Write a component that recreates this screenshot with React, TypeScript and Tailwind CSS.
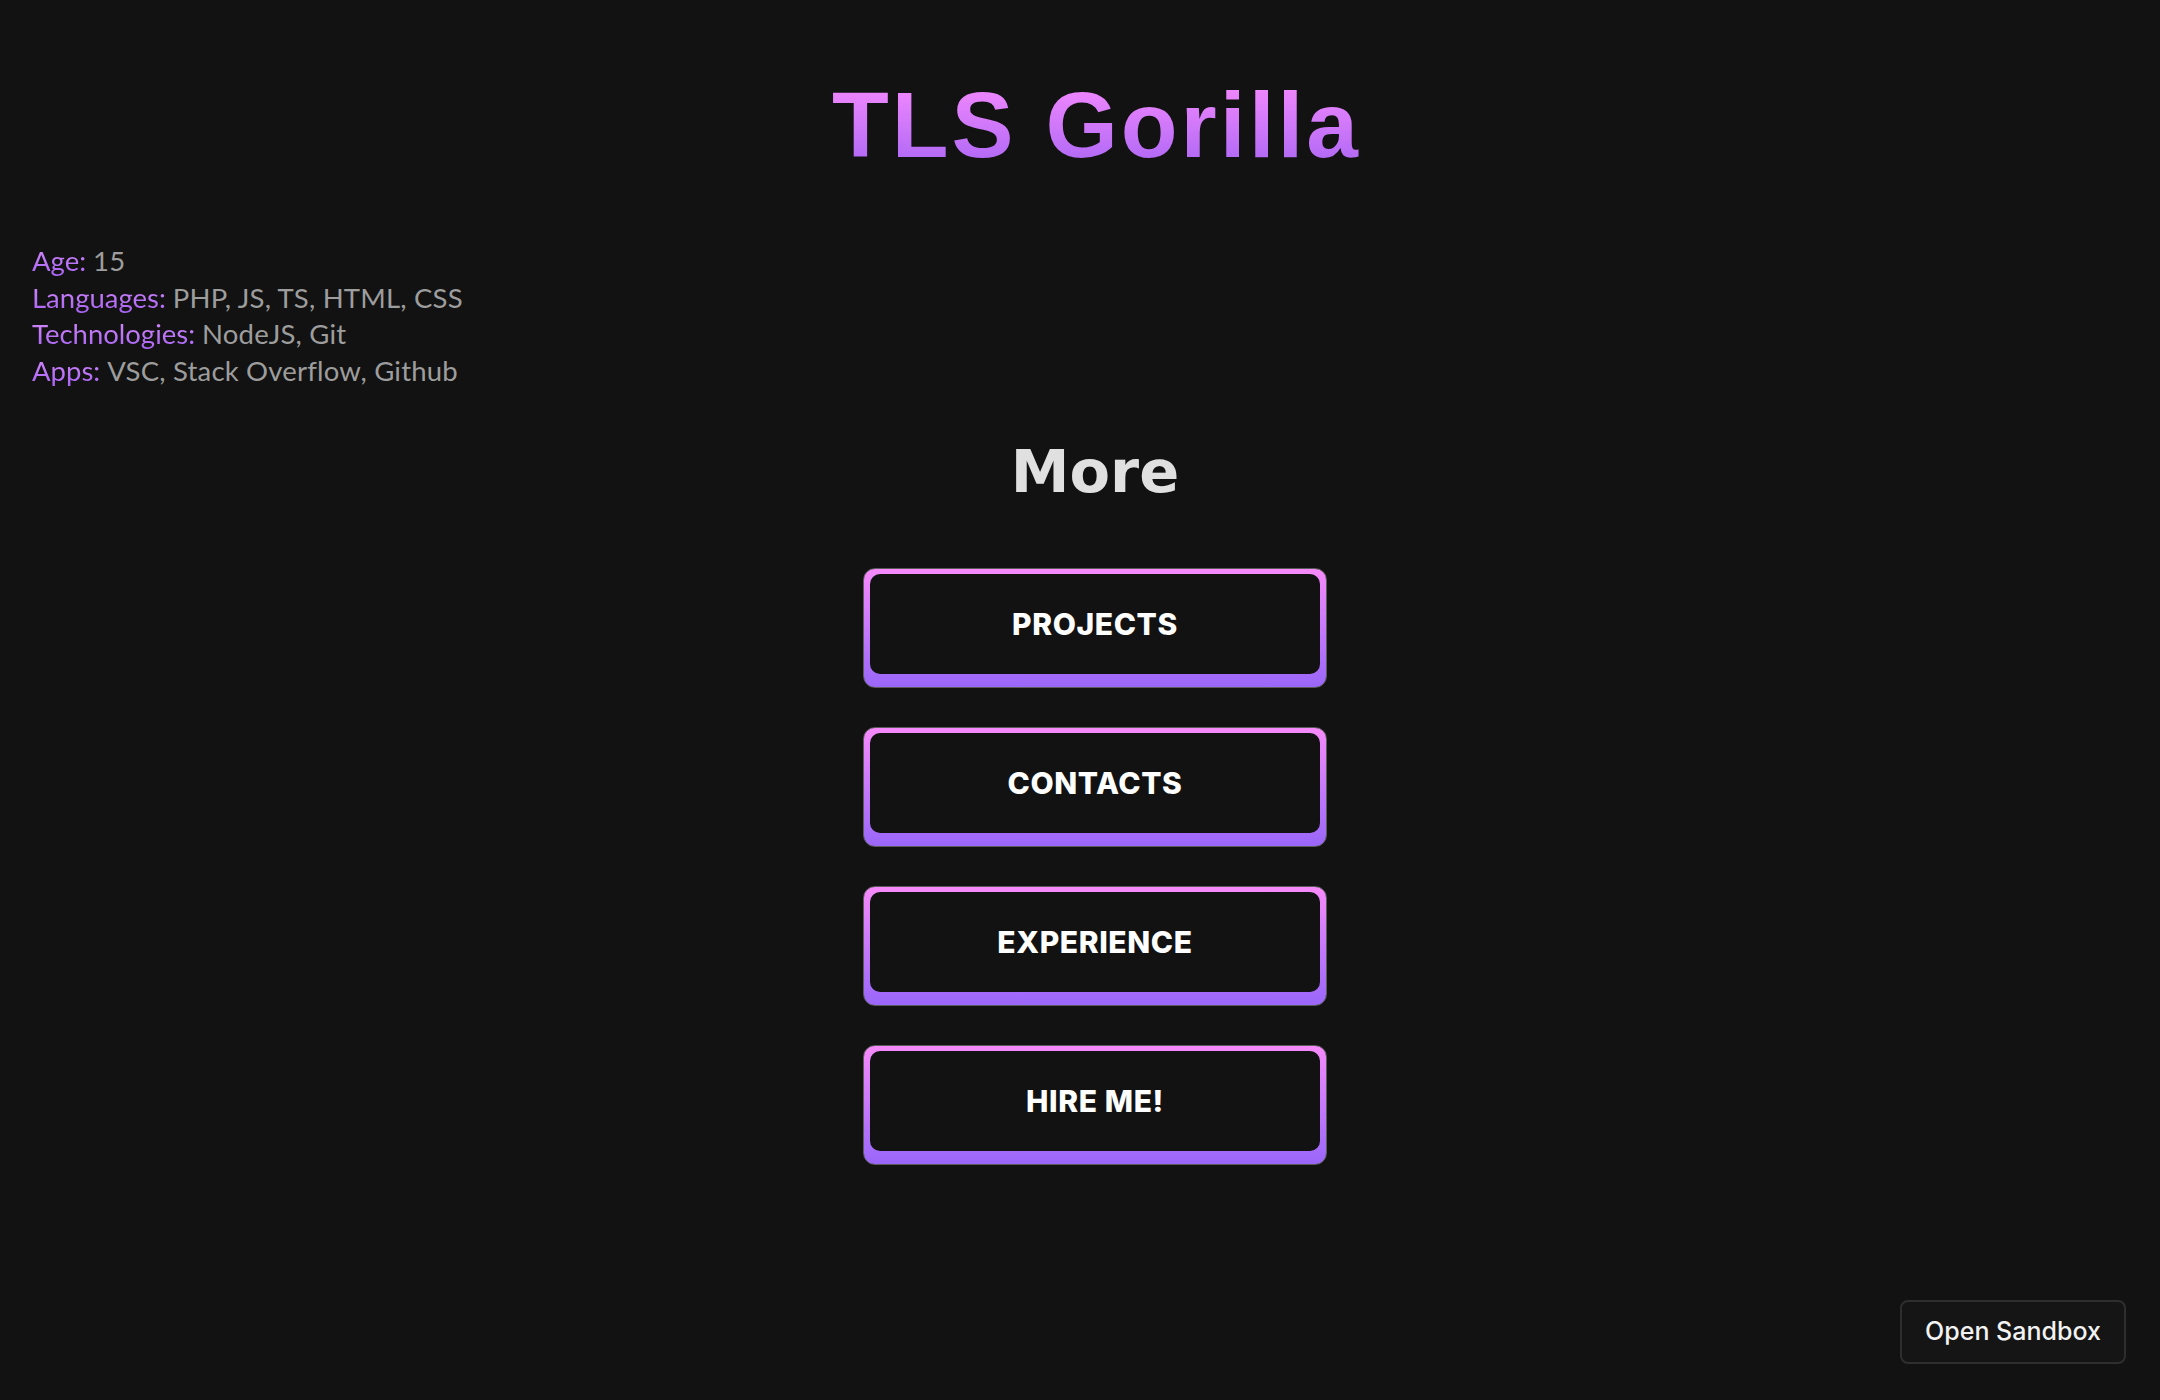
import React from "react";

const info: [string, string][] = [
  ["Age:", "15"],
  ["Languages:", "PHP, JS, TS, HTML, CSS"],
  ["Technologies:", "NodeJS, Git"],
  ["Apps:", "VSC, Stack Overflow, Github"],
];

const buttons = ["PROJECTS", "CONTACTS", "EXPERIENCE", "HIRE ME!"];

export default function App() {
  return (
    <div className="relative min-h-[1400px] w-full bg-[#121212] overflow-hidden">
      <div className="flex flex-col items-center pt-[79px] pl-[30px]">
        <h1
          className="pl-[3px] text-[93px] leading-[93px] font-bold tracking-[3px] bg-gradient-to-b from-[#f88afe] to-[#a964f4] bg-clip-text text-transparent"
          style={{ fontFamily: '"Liberation Sans", Arial, sans-serif' }}
        >
          TLS Gorilla
        </h1>
      </div>

      <div
        className="mt-[71px] pl-[32px] flex flex-col text-[27.5px] leading-[36.7px]"
        style={{ fontFamily: 'Lato, "Open Sans", sans-serif' }}
      >
        {info.map(([k, v]) => (
          <div key={k} className="flex gap-[7px]">
            <span className="bg-gradient-to-b from-[#d88cfc] to-[#a45ff2] bg-clip-text text-transparent">
              {k}
            </span>
            <span className="text-[#9d9d9d] tracking-[0.2px]">{v}</span>
          </div>
        ))}
      </div>

      <div className="flex flex-col items-center pl-[30px] mt-[52px]">
        <h2
          className="text-[59px] leading-[59px] font-bold text-[#e0e0e0]"
          style={{ fontFamily: '"DejaVu Sans", Verdana, sans-serif' }}
        >
          More
        </h2>
        <div className="mt-[67px] flex flex-col gap-[39px]">
          {buttons.map((b) => (
            <div
              key={b}
              className="w-[464px] h-[120px] rounded-[12px] border border-[#5a5a5a] bg-gradient-to-b from-[#f78afb] to-[#9a66f9] pt-[5px] px-[6px] pb-[13px]"
            >
              <div className="h-full w-full rounded-[10px] bg-[#121212] flex items-center justify-center pt-[2px]">
                <span
                  className="text-white text-[30px] font-extrabold tracking-[0.6px]"
                  style={{ fontFamily: 'Inter, "Liberation Sans", sans-serif' }}
                >
                  {b}
                </span>
              </div>
            </div>
          ))}
        </div>
      </div>

      <button
        className="absolute right-[34px] bottom-[36px] w-[226px] h-[64px] rounded-[8px] border-2 border-[#2e2e2e] bg-[#151515] text-[#f2f2f2] text-[25px] font-medium flex items-center justify-center"
        style={{ fontFamily: 'Inter, "Liberation Sans", sans-serif' }}
      >
        Open Sandbox
      </button>
    </div>
  );
}
